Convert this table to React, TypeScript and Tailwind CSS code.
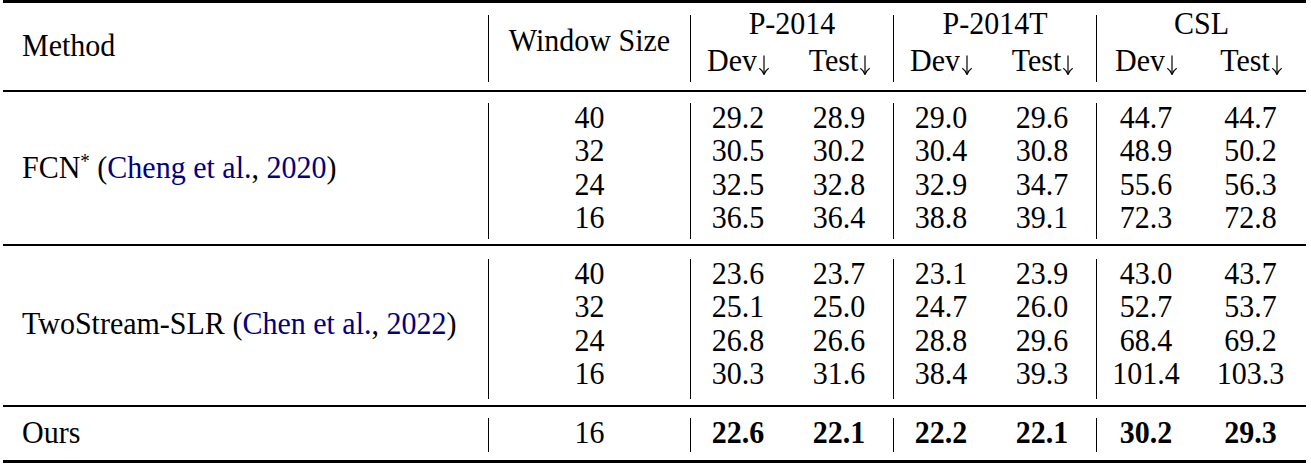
import React from "react";

const GRID = "grid grid-cols-[485px_202px_95px_108px_95px_108px_99px_111px]";

const T = ({ children }: { children: React.ReactNode }) => (
  <span className="inline-block scale-y-[1.07]">{children}</span>
);

const Down = () => (
  <svg width="12" height="20" viewBox="0 0 12 20" className="inline-block align-[-5px] ml-[1px]">
    <path d="M6 0.5V19.3" stroke="black" strokeWidth="1.2" fill="none" />
    <path d="M1.3 13.2C3.5 14.6 5.1 16.9 6 19.7C6.9 16.9 8.5 14.6 10.7 13.2" stroke="black" strokeWidth="1.1" fill="none" />
  </svg>
);

const fcn = [
  ["40", "29.2", "28.9", "29.0", "29.6", "44.7", "44.7"],
  ["32", "30.5", "30.2", "30.4", "30.8", "48.9", "50.2"],
  ["24", "32.5", "32.8", "32.9", "34.7", "55.6", "56.3"],
  ["16", "36.5", "36.4", "38.8", "39.1", "72.3", "72.8"],
];

const two = [
  ["40", "23.6", "23.7", "23.1", "23.9", "43.0", "43.7"],
  ["32", "25.1", "25.0", "24.7", "26.0", "52.7", "53.7"],
  ["24", "26.8", "26.6", "28.8", "29.6", "68.4", "69.2"],
  ["16", "30.3", "31.6", "38.4", "39.3", "101.4", "103.3"],
];

const ours = [["16", "22.6", "22.1", "22.2", "22.1", "30.2", "29.3"]];

function Group({
  method,
  rows,
  bold,
  h,
  pad,
  padTop,
}: {
  method: React.ReactNode;
  rows: string[][];
  bold?: boolean;
  h: string;
  pad: string;
  padTop: string;
}) {
  const cols = rows[0].map((_, c) => rows.map((r) => r[c]));
  return (
    <div className={`${GRID} ${pad}`}>
      <div className={`${h} pl-[19px] ${padTop} leading-[33.3px] whitespace-nowrap`}>
        <T>{method}</T>
      </div>
      {cols.map((vals, c) => (
        <div
          key={c}
          className={`${h} text-center leading-[33.3px] ${c === 0 || c % 2 === 1 ? "border-l border-black" : ""} ${
            bold && c > 0 ? "font-bold" : ""
          }`}
        >
          <div className="-mt-[3px]">
            {vals.map((v, i) => (
              <div key={i}>
                <T>{v}</T>
              </div>
            ))}
          </div>
        </div>
      ))}
    </div>
  );
}

function HeadGroup({ name, sub }: { name: string; sub: string }) {
  return (
    <div className="col-span-2 h-[67px] border-l border-black leading-[37px]">
      <div className="-mt-[11px]">
        <div className="text-center">
          <T>{name}</T>
        </div>
        <div className={sub}>
          <div className="text-center">
            <T>Dev</T>
            <Down />
          </div>
          <div className="text-center">
            <T>Test</T>
            <Down />
          </div>
        </div>
      </div>
    </div>
  );
}

export default function App() {
  const blue = "text-[#000080]";
  return (
    <div className="w-[1311px] h-[467px] bg-white overflow-hidden">
      <div className="ml-[3px] w-[1303px] font-['Liberation_Serif',_'Times_New_Roman',_serif] text-[30px] text-black">
        <div className="h-[3px] bg-black" />
        <div className={`${GRID} pt-[12px] pb-[8px]`}>
          <div className="h-[67px] pl-[19px] pt-[15px] leading-[29px]">
            <T>Method</T>
          </div>
          <div className="h-[67px] border-l border-black text-center pt-[10px] leading-[29px]">
            <T>Window Size</T>
          </div>
          <HeadGroup name="P-2014" sub="grid grid-cols-[95px_108px]" />
          <HeadGroup name="P-2014T" sub="grid grid-cols-[95px_108px]" />
          <HeadGroup name="CSL" sub="grid grid-cols-[99px_111px]" />
        </div>
        <div className="h-[2px] bg-black" />
        <Group
          h="h-[136px]"
          pad="pt-[11px] pb-[5px]"
          padTop="pt-[47px]"
          rows={fcn}
          method={
            <>
              FCN<sup className="text-[19px]">*</sup> (<span className={blue}>Cheng et al.</span>,{" "}
              <span className={blue}>2020</span>)
            </>
          }
        />
        <div className="h-[2px] bg-black" />
        <Group
          h="h-[140px]"
          pad="pt-[13px] pb-[6px]"
          padTop="pt-[47px]"
          rows={two}
          method={
            <>
              TwoStream-SLR (<span className={blue}>Chen et al.</span>, <span className={blue}>2022</span>)
            </>
          }
        />
        <div className="h-[2px] bg-black" />
        <Group
          h="h-[34px]"
          pad="pt-[11px] pb-[8px]"
          padTop="-mt-[3px]"
          rows={ours}
          bold
          method={<>Ours</>}
        />
        <div className="h-[3px] bg-black" />
      </div>
    </div>
  );
}
